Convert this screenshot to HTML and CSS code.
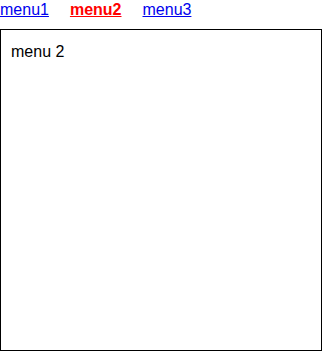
FILE: index.html
```html
<!DOCTYPE html>
<html>
<head>
<meta charset="utf-8">
<link rel="stylesheet" href="styles.css">
</head>
<body>
<nav class="menu">
  <a href="#" class="menu-link">menu1</a>
  <a href="#" class="menu-link active">menu2</a>
  <a href="#" class="menu-link">menu3</a>
</nav>
<div class="panel">menu 2</div>
</body>
</html>
```
FILE: styles.css
```css
html, body {
  margin: 0;
  padding: 0;
  background: #fff;
  font-family: "Liberation Sans", Arial, sans-serif;
  font-size: 16px;
}
.menu {
  display: flex;
  gap: 21px;
  height: 29px;
  line-height: 20px;
}
.menu-link {
  color: #0000ee;
  text-decoration: underline;
}
.menu-link.active {
  color: #ff0000;
  font-weight: bold;
}
.panel {
  width: 322px;
  height: 322px;
  border: 1px solid #000;
  padding: 12px 10px;
  box-sizing: border-box;
  color: #000;
  line-height: 20px;
}
```
